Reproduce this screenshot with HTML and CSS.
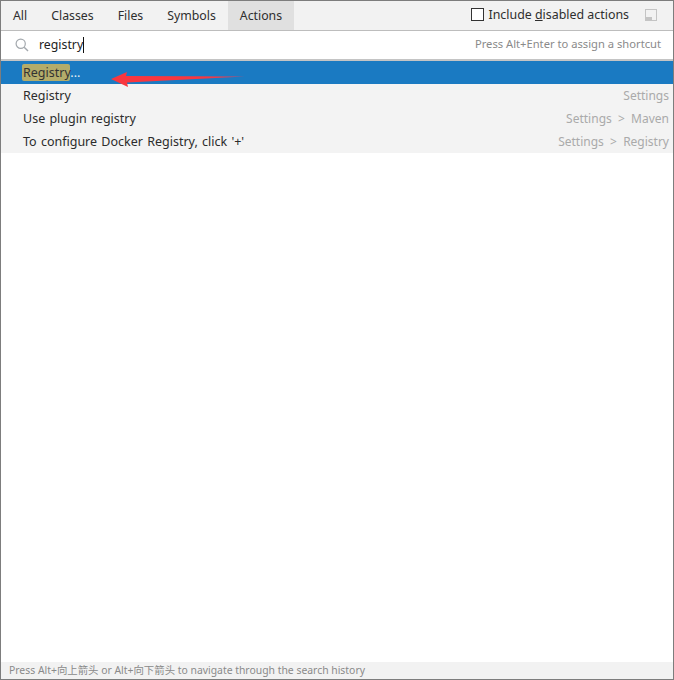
FILE: index.html
```html
<!DOCTYPE html>
<html lang="en">
<head>
<meta charset="utf-8">
<title>Search Everywhere</title>
<link rel="stylesheet" href="styles.css">
</head>
<body>
<div class="popup">
  <div class="topbar">
    <div class="tabs">
      <span class="tab">All</span>
      <span class="tab">Classes</span>
      <span class="tab">Files</span>
      <span class="tab">Symbols</span>
      <span class="tab tab-active">Actions</span>
    </div>
    <div class="options">
      <label class="include"><span class="checkbox"></span><span>Include <u>d</u>isabled actions</span></label>
      <svg class="pin" width="12" height="12" viewBox="0 0 12 12"><rect x="0.5" y="0.5" width="11" height="11" fill="#f2f2f2" stroke="#c4c4c4"/><rect x="1" y="8" width="6" height="3" fill="#c4c4c4"/></svg>
    </div>
  </div>
  <div class="searchbar">
    <svg class="search-icon" width="14" height="14" viewBox="0 0 14 14"><circle cx="5.7" cy="5.7" r="4.6" fill="none" stroke="#a3a8ad" stroke-width="1.2"/><path d="M9.2 9.2L13 13" stroke="#a3a8ad" stroke-width="1.4"/></svg>
    <span class="query">registry</span><span class="caret"></span>
    <span class="hint">Press Alt+Enter to assign a shortcut</span>
  </div>
  <div class="results">
    <div class="row row-selected">
      <span class="row-label"><span class="match">Registry</span><span class="ellipsis">...</span></span>
      <svg class="arrow" width="135" height="17" viewBox="0 0 135 17"><defs><linearGradient id="arrow-fade" x1="0" x2="1" y1="0" y2="0"><stop offset="0" stop-color="#f9373f"/><stop offset="0.7" stop-color="#f9373f"/><stop offset="1" stop-color="#b0507a"/></linearGradient></defs><path d="M0 8L16 1L15 5L134 5.500L16 11.500L17 16Z" fill="url(#arrow-fade)"/></svg>
    </div>
    <div class="row"><span class="row-label">Registry</span><span class="row-path">Settings</span></div>
    <div class="row"><span class="row-label">Use plugin registry</span><span class="row-path">Settings &nbsp;&gt;&nbsp; Maven</span></div>
    <div class="row"><span class="row-label">To configure Docker Registry, click '+'</span><span class="row-path">Settings &nbsp;&gt;&nbsp; Registry</span></div>
  </div>
  <div class="footer">Press Alt+向上箭头 or Alt+向下箭头 to navigate through the search history</div>
</div>
</body>
</html>
```
FILE: styles.css
```css
* { box-sizing: border-box; }
html, body { margin: 0; padding: 0; height: 100%; }
body {
  font-family: "Noto Sans", "Noto Sans CJK SC", sans-serif;
  font-size: 12.5px;
  color: #333;
  background: #fff;
}
.popup {
  height: 680px;
  display: flex;
  flex-direction: column;
  border: 1px solid #7d7d7d;
}
.topbar {
  height: 30px;
  flex: none;
  display: flex;
  justify-content: space-between;
  background: #f2f2f2;
  border-bottom: 1px solid #bdbdbd;
}
.tabs { display: flex; }
.tab {
  padding: 0 12px;
  font-size: 12.3px;
  line-height: 29px;
  color: #2e2e2e;
}
.tab-active { background: #e0e0e0; }
.options {
  display: flex;
  align-items: center;
  padding: 0 16px 2px 0;
  gap: 16px;
}
.include { display: flex; align-items: center; gap: 4px; font-size: 12.4px; color: #2e2e2e; }
.checkbox {
  width: 13px;
  height: 13px;
  background: #fff;
  border: 1px solid #333;
}
.pin { margin-top: 1px; }
.searchbar {
  height: 30px;
  flex: none;
  display: flex;
  align-items: center;
  padding: 0 12px 1px 14px;
  background: #fff;
  border-bottom: 2px solid #c4c4c4;
}
.search-icon { margin-right: 10px; }
.query { font-size: 12.3px; color: #222; }
.caret { width: 1px; height: 16px; background: #111; }
.hint { margin-left: auto; padding-bottom: 2px; font-size: 11.2px; color: #8a8a8a; }
.results { flex: none; background: #f3f3f3; }
.row {
  position: relative;
  height: 23px;
  display: flex;
  justify-content: space-between;
  align-items: center;
  padding: 0 4px 0 22px;
}
.row-selected { background: #1a7ac2; }
.row-label { color: #2c2c2c; word-spacing: 1px; }
.row-path { font-size: 12px; color: #aaa; }
.match {
  margin-left: -1px;
  padding-left: 1px;
  background: #b3ac6a;
  border-radius: 2px;
  color: #333;
}
.ellipsis { color: #e8eef3; }
.arrow { position: absolute; left: 110px; top: 10px; }
.footer {
  margin-top: auto;
  height: 17px;
  flex: none;
  padding-left: 8px;
  line-height: 17px;
  font-size: 10.4px;
  color: #8a8a8a;
  background: #f2f2f2;
}
```
